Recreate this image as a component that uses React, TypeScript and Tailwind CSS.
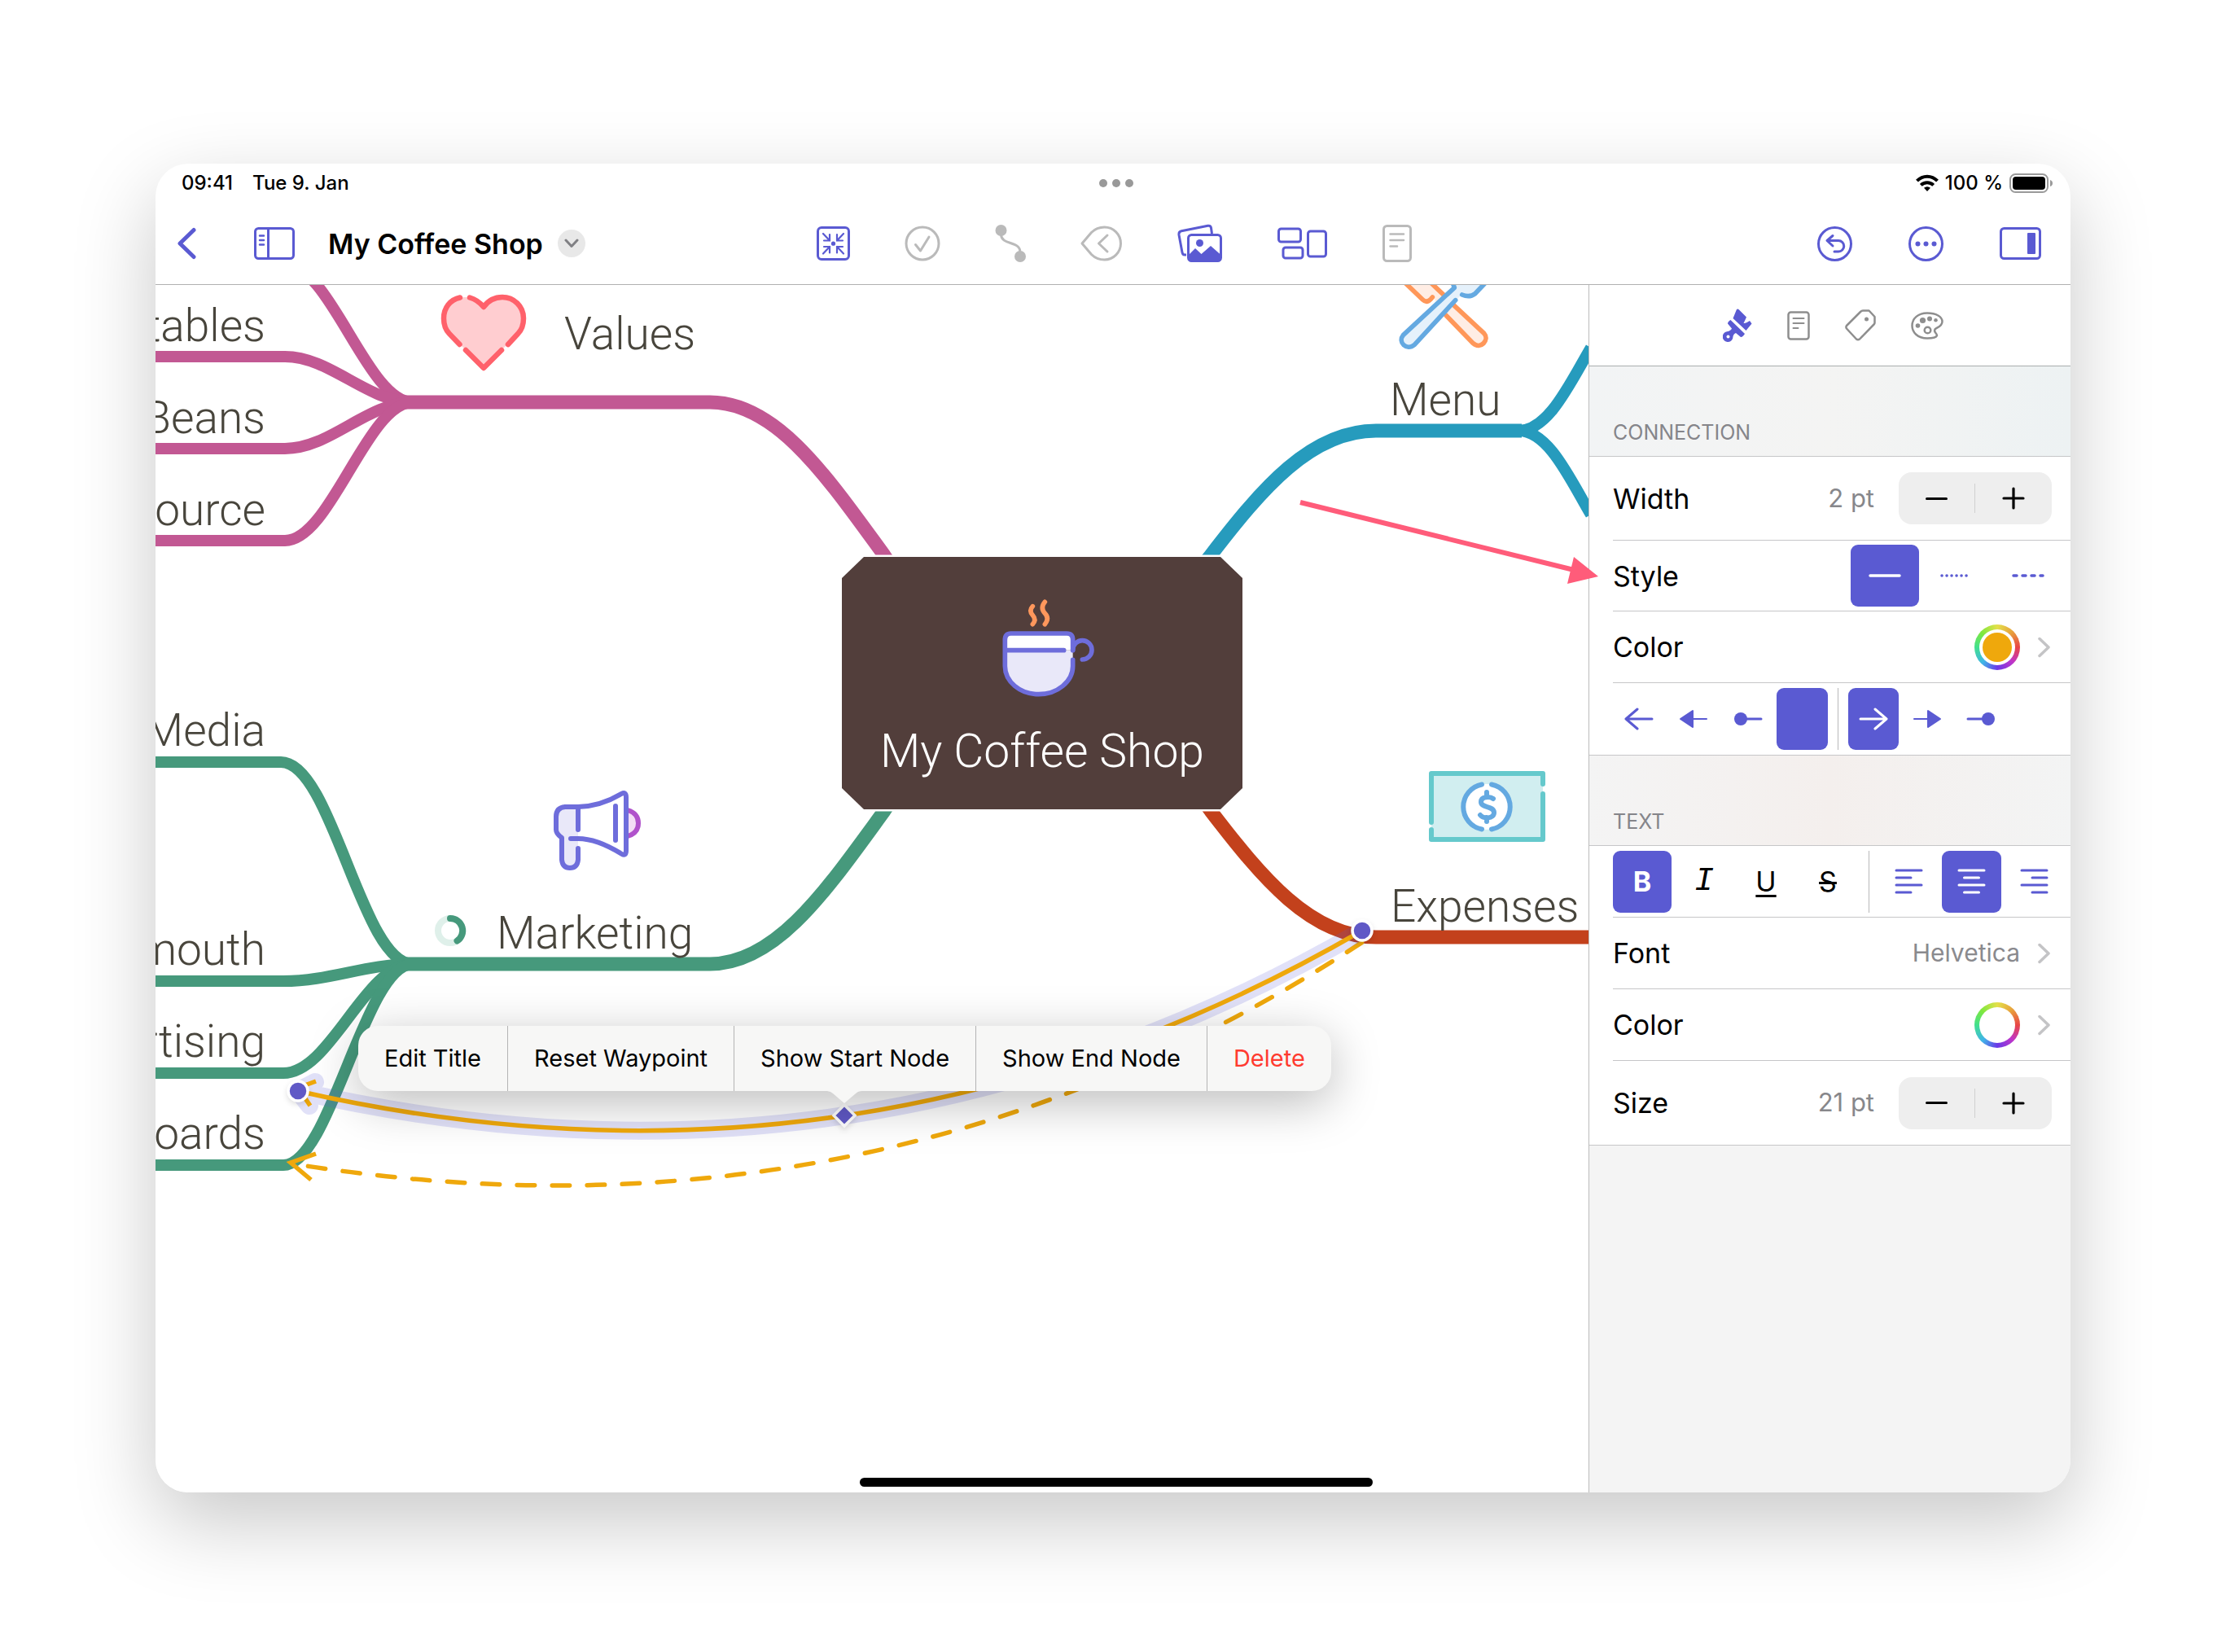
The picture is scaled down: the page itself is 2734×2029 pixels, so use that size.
import { useState, type ReactNode } from "react";
import clsx from "clsx";

const LABEL_BASELINE = 51;

// Labels on the left edge are anchored by their right end, the others by their left end
const labels = [
  { text: "tables", x: 135, y: 69, end: true },
  { text: "Beans", x: 135, y: 182, end: true },
  { text: "ource", x: 135, y: 295, end: true },
  { text: "Media", x: 135, y: 566, end: true },
  { text: "mouth", x: 135, y: 835, end: true },
  { text: "rtising", x: 135, y: 948, end: true },
  { text: "oards", x: 135, y: 1061, end: true },
  { text: "Values", x: 502, y: 79, end: false },
  { text: "Marketing", x: 419, y: 815, end: false },
  { text: "Menu", x: 1516, y: 160, end: false },
  { text: "Expenses", x: 1517, y: 782, end: false },
];

const menuItems = ["Edit Title", "Reset Waypoint", "Show Start Node", "Show End Node", "Delete"];

function IconButton({ label, children, className }: { label: string; children: ReactNode; className?: string }) {
  return (
    <button type="button" aria-label={label} className={clsx("flex shrink-0 items-center justify-center", className)}>
      {children}
    </button>
  );
}

function StatusBar() {
  return (
    <div className="grid h-12 grid-cols-[1fr_auto_1fr] items-center pl-2 text-[24px] font-medium">
      <div className="flex gap-6 pl-6">
        <span>09:41</span>
        <span>Tue 9. Jan</span>
      </div>
      <div className="flex gap-[6px]">
        <span className="size-[10px] rounded-full bg-[#999]" />
        <span className="size-[10px] rounded-full bg-[#999]" />
        <span className="size-[10px] rounded-full bg-[#999]" />
      </div>
      <div className="flex items-center justify-end gap-2 pr-[22px]">
        <svg width="28" height="22" viewBox="0 0 28 22" fill="none" stroke="black" strokeWidth="4">
          <path d="M1.5 8.2C8.5 .8 19.500 .8 26.500 8.200" />
          <path d="M6.300 13.400C10.500 9.200 17.500 9.200 21.700 13.400" />
          <path d="M14 21l-4-4.200q4-3.200 8 0z" fill="black" stroke="none" />
        </svg>
        <span>100 %</span>
        <svg width="53" height="24" viewBox="0 0 53 24">
          <rect x="1" y="1" width="46" height="22" rx="6.500" fill="none" stroke="#9a9a9a" strokeWidth="2" />
          <rect x="4" y="4" width="40" height="16" rx="4" />
          <path d="M50 8q3 1 3 4t-3 4z" fill="#9a9a9a" />
        </svg>
      </div>
    </div>
  );
}

function Toolbar() {
  return (
    <div className="grid h-[100px] grid-cols-[1fr_auto_1fr] items-center pl-2 text-[#5a5ad2]">
      <div className="flex items-center pl-[19px]">
        <IconButton label="Back">
          <svg width="24" height="40" viewBox="0 0 24 40" fill="none" stroke="currentColor" strokeWidth="5" strokeLinecap="round" strokeLinejoin="round">
            <path d="M20 3.500L3 20l17 16.500" />
          </svg>
        </IconButton>
        <IconButton label="Toggle sidebar" className="ml-[70px]">
          <svg width="50" height="40" viewBox="0 0 50 40" fill="none" stroke="currentColor" strokeWidth="3" strokeLinecap="round">
            <rect x="1.500" y="1.500" width="47" height="37" rx="4" />
            <path d="M17.500 2v36" />
            <path d="M7 10.500h5M7 16h5M7 21.500h5" strokeWidth="2.500" />
          </svg>
        </IconButton>
        <h1 className="ml-[41px] text-[34px] font-semibold whitespace-nowrap text-black">My Coffee Shop</h1>
        <IconButton label="Document options" className="ml-[18px] size-[34px] rounded-full bg-[#e8e8e8]">
          <svg width="20" height="12" viewBox="0 0 20 12" fill="none" stroke="#808084" strokeWidth="3" strokeLinecap="round" strokeLinejoin="round">
            <path d="M3 2l7 7.500L17 2" />
          </svg>
        </IconButton>
      </div>

      <div className="flex items-center gap-[67px] pr-[6px]">
        <IconButton label="Focus">
          <svg width="41" height="42" viewBox="0 0 41 42" fill="none" stroke="currentColor" strokeWidth="3">
            <rect x="1.500" y="1.500" width="38" height="39" rx="4.500" />
            <g strokeWidth="2.200" strokeLinecap="round">
              <path d="M8 9l8 8.500M16 10v7.500H9" />
              <path d="M33 9l-8 8.500M25 10v7.500h7" />
              <path d="M8 33.500l8-8.500M16 32.500V25H9" />
              <path d="M33 33.500L25 25M25 32.500V25h7" />
            </g>
            <circle cx="20.500" cy="21.200" r="2.600" fill="currentColor" stroke="none" />
          </svg>
        </IconButton>
        <IconButton label="Task" className="text-[#bababa]">
          <svg width="44" height="44" viewBox="0 0 44 44" fill="none" stroke="currentColor" strokeWidth="3" strokeLinecap="round" strokeLinejoin="round">
            <circle cx="22" cy="22" r="20" />
            <path d="M13.500 23.500L19.500 31 30 14" />
          </svg>
        </IconButton>
        <IconButton label="Connect" className="text-[#bababa]">
          <svg width="38" height="48" viewBox="0 0 38 48" fill="none" stroke="currentColor" strokeWidth="3">
            <path d="M7.500 8v5C8 27 31 20 31 35v5" />
            <circle cx="7.500" cy="8" r="7" fill="currentColor" stroke="none" />
            <circle cx="31" cy="40" r="7" fill="currentColor" stroke="none" />
          </svg>
        </IconButton>
        <IconButton label="Fold" className="text-[#bababa]">
          <svg width="52" height="44" viewBox="0 0 52 44" fill="none" stroke="currentColor" strokeWidth="3" strokeLinecap="round" strokeLinejoin="round">
            <path d="M2 22L13.500 8.500C18 4 23.500 2 29.500 2a20 20 0 0 1 0 40C23.500 42 18 40 13.500 35.500z" />
            <path d="M33 12L22.500 22 33 32" />
          </svg>
        </IconButton>
        <IconButton label="Stickers">
          <svg width="56" height="48" viewBox="0 0 56 48" fill="none" stroke="currentColor" strokeWidth="3" strokeLinejoin="round">
            <path d="M11 38H9q-2.500 0-3-3L2 13.500Q1.500 9.500 5 8.800L37.500 2.300Q41 1.800 41.500 5l1 7" />
            <rect x="13.500" y="13.500" width="40" height="32" rx="4" />
            <path d="M14 38l8-8 7.500 7L41 27l12.500 11v4q0 3-3 3h-34q-3 0-3-3z" fill="currentColor" stroke="none" />
            <circle cx="27.500" cy="23.500" r="4.500" fill="currentColor" stroke="none" />
          </svg>
        </IconButton>
        <IconButton label="Layout">
          <svg width="62" height="48" viewBox="0 0 62 48" fill="none" stroke="currentColor" strokeWidth="3">
            <rect x="1.500" y="6" width="27" height="16" rx="3" />
            <rect x="7" y="29" width="24" height="13" rx="3" />
            <rect x="37.500" y="9" width="22" height="31" rx="3" />
          </svg>
        </IconButton>
        <IconButton label="Note" className="text-[#bababa]">
          <svg width="36" height="46" viewBox="0 0 36 46" fill="none" stroke="currentColor" strokeWidth="3" strokeLinecap="round">
            <rect x="1.500" y="1.500" width="33" height="43" rx="4" />
            <path d="M9.500 11.500h16.500M9.500 19h16.500M9.500 26.500H18" strokeWidth="2.500" />
          </svg>
        </IconButton>
      </div>

      <div className="flex items-center justify-end gap-[69px] pr-9">
        <IconButton label="Undo">
          <svg width="43" height="43" viewBox="0 0 43 43" fill="none" stroke="currentColor" strokeWidth="3" strokeLinecap="round" strokeLinejoin="round">
            <circle cx="21.500" cy="21.500" r="20" />
            <path d="M19 11.500L12 17.500l7 6.500M12.500 17.500H26a6.700 6.700 0 0 1 0 13.500h-5" />
          </svg>
        </IconButton>
        <IconButton label="More">
          <svg width="43" height="43" viewBox="0 0 43 43" fill="currentColor">
            <circle cx="21.500" cy="21.500" r="20" fill="none" stroke="currentColor" strokeWidth="3" />
            <circle cx="11.500" cy="21.500" r="3" />
            <circle cx="21.500" cy="21.500" r="3" />
            <circle cx="31.500" cy="21.500" r="3" />
          </svg>
        </IconButton>
        <IconButton label="Toggle inspector">
          <svg width="51" height="40" viewBox="0 0 51 40" fill="none" stroke="currentColor" strokeWidth="3">
            <rect x="1.500" y="1.500" width="48" height="37" rx="4" />
            <rect x="34" y="7" width="10" height="26" rx="1" fill="currentColor" stroke="none" />
          </svg>
        </IconButton>
      </div>
    </div>
  );
}

function Links() {
  return (
    <svg className="absolute top-0 left-0" width="1760" height="1484" viewBox="0 0 1760 1484" fill="none">
      {/* Values */}
      <g stroke="#c25893" strokeWidth="14">
        <path d="M159 -25C215 -25 260 144 316 144" />
        <path d="M-10 88H159C215 88 260 144 316 144" />
        <path d="M-10 201H159C215 201 260 144 316 144" />
        <path d="M-10 314H159C215 314 260 144 316 144" />
        <path d="M306 144H681C763 144 825 236 895 332l16 24" strokeWidth="17" />
      </g>
      {/* Marketing */}
      <g stroke="#46997c" strokeWidth="14">
        <path d="M-10 586H154C217 586 253 834 316 834" />
        <path d="M-10 855H157C215 855 257 834 316 834" />
        <path d="M-10 968H157C215 968 257 834 316 834" />
        <path d="M-10 1081H157C215 1081 257 834 316 834" />
        <path d="M306 834H681C763 834 825 742 895 646l16-24" strokeWidth="17" />
      </g>
      {/* Menu */}
      <g stroke="#269bbd" strokeWidth="14">
        <path d="M1674 179C1711 179 1737 121 1763 77" />
        <path d="M1674 179C1711 179 1737 238 1763 282" />
        <path d="M1280 352l16-20C1359 250 1419 179 1499 179H1678" strokeWidth="17" />
      </g>
      {/* Expenses */}
      <path d="M1280 624l16 22C1359 728 1419 801 1499 801H1762" stroke="#c3411c" strokeWidth="17" />

      {/* Progress of Marketing */}
      <circle cx="362" cy="793" r="15" stroke="#dff0ea" strokeWidth="8" />
      <path d="M362 778a15 15 0 0 1 8.500 27.500" stroke="#46997c" strokeWidth="8" strokeLinecap="round" />

      {/* Dashed connection */}
      <g stroke="#efa80c" strokeWidth="5.500">
        <path d="M166 1079Q889 1196 1484 806" strokeDasharray="21.500 21.500" strokeDashoffset="21.500" strokeLinecap="round" />
        <path d="M197 1067L166 1078l25 21" />
      </g>

      {/* Selected connection */}
      <g stroke="#5856d6" strokeOpacity=".18" strokeWidth="22" strokeLinecap="round" strokeLinejoin="round">
        <path d="M175 990Q869 1148 1482 793M196 979L175 990l14 18" />
      </g>
      <path d="M175 990Q869 1148 1482 793M197 978L175 986l15 22" stroke="#efa80c" strokeWidth="5.500" />

      {/* Central topic */}
      <path d="M870 334h438l27 26v258l-27 26H870l-27-26V360z" fill="#523e3b" stroke="white" strokeWidth="5" paintOrder="stroke" />

      <g fill="#6059c6" stroke="white" strokeWidth="3.500">
        <circle cx="175" cy="990" r="12" className="drop-shadow-md" />
        <circle cx="1482" cy="793" r="12" className="drop-shadow-md" />
        <path d="M846 1007l13 13-13 13-13-13z" className="drop-shadow-md" />
      </g>
    </svg>
  );
}

function Stickers() {
  return (
    <>
      <svg className="absolute top-[11px] left-[350px]" width="106" height="96" viewBox="0 0 106 96" fill="none" stroke="#ff616b" strokeWidth="6.500" strokeLinecap="round" strokeLinejoin="round">
        <path d="M53 16C48 9 40 4 30 4 15 4 4 15 4 30c0 8 2 14 7 19l42 42 42-42c5-5 7-11 7-19C102 15 90 4 76 4 66 4 58 9 53 16z" fill="#ffcdd0" stroke="none" />
        <path d="M24 4.500C12 7 4 17 4 30c0 8 2 14 7 19l12.500 13" />
        <path d="M36 4.500C43 6.500 48 10 53 16 58 9 66 4 76 4c14 0 26 11 26 26 0 8-2 14-7 19L83 62" />
        <path d="M31 69l22 22 22-22" />
      </svg>
      <svg className="absolute top-0 left-[1524px]" width="115" height="82" viewBox="225 30 345 246" fill="none" strokeWidth="17" strokeLinecap="round" strokeLinejoin="round">
        <path d="M250 15L322 84Q337 98 358 75L508 245C535 270 570 232 548 208L350 20z" fill="#ffede4" stroke="none" />
        <path d="M250 15L322 84Q337 98 352 82l6-7M345 15l55 52M436 104L548 208C570 232 535 270 508 245L408 142" stroke="#ff9759" />
        <path d="M430 15l9 25L250 215C230 240 262 275 292 250L443 86l24-20Q495 78 515 62L560 15z" fill="#e5f1fb" stroke="none" />
        <path d="M430 15l9 25L250 215C230 240 262 275 292 250L443 86M467 66Q495 78 515 62L560 15" stroke="#64a9e1" />
      </svg>
      <svg className="absolute top-[620px] left-[487px]" width="112" height="103" viewBox="0 0 112 103" fill="none" stroke="#6e6ddb" strokeWidth="6" strokeLinecap="round" strokeLinejoin="round">
        <path d="M32 21H16Q5 22 5 33V49q0 5 7 10V86q1 10 10 10t10-10z" fill="#e9e8f9" stroke="none" />
        <path d="M93 25q13 4 13 16T93 57z" fill="#f3ddf5" stroke="none" />
        <path d="M93 25q13 4 13 16T93 57" stroke="#b052cb" />
        <path d="M32 49V21H16Q5 22 5 33V49q0 5 7 10V86q1 10 10 10t10-10V72" />
        <path d="M32 21Q60 20 85 5q6-3 6 4V75q0 7-6 3.500Q55 60 32 60H23M78 20V62" />
      </svg>
      <svg className="absolute top-[596px] left-[1563px]" width="146" height="90" viewBox="0 0 146 90" fill="none" stroke="#65c9cc" strokeWidth="6" strokeLinecap="round" strokeLinejoin="round">
        <path d="M4 4h137v81H4z" fill="#d1eef0" stroke="none" />
        <path d="M4 64V4h137v13M141 29V85H4V73" />
        <circle cx="72" cy="45" r="28" fill="white" stroke="none" />
        <g stroke="#64a9e1">
          <path d="M66 17.500a28 28 0 0 0 0 55M78 17.500a28 28 0 0 1 0 55" />
          <path d="M80 35C76 32 65 32 65 39c0 8 16 4 16 13 0 8-13 8-17 3M72 27v5M72 58v5" />
        </g>
      </svg>
    </>
  );
}

function CoffeeCup() {
  return (
    <svg className="ml-4" width="120" height="125" viewBox="625 220 360 375" fill="none" stroke="#6e6ddb" strokeWidth="17" strokeLinecap="round" strokeLinejoin="round">
      <path d="M746 252c-11 12-8 24 0 33 9 10 11 21 0 33M791 236c-13 16-11 30 0 42 12 12 12 25 0 40" stroke="#ff975c" />
      <path d="M644 352h250v62H644z" fill="white" stroke="none" />
      <path d="M644 414h250v58c0 58-58 104-126 104s-124-46-124-104z" fill="#e9e8f9" stroke="none" />
      <path d="M894 414v-38q0-24-22-24H666q-22 0-22 24v96c0 58 56 104 124 104s126-46 126-104v-23M644 414h217" />
      <path d="M894 413a35 35 0 1 1 35 35" />
    </svg>
  );
}

function ContextMenu() {
  return (
    <div className="absolute top-[910px] left-[249px] h-20 rounded-3xl bg-[#f7f7f6] shadow-[0_14px_60px_rgba(0,0,0,0.27)]">
      <div role="menu" className="flex h-full text-[29px]">
        {menuItems.map((item) => (
          <button
            key={item}
            type="button"
            role="menuitem"
            className={clsx("border-r border-[#b4b4b4] px-8 whitespace-nowrap last:border-r-0", item === "Delete" && "text-[#ff3b30]")}
          >
            {item}
          </button>
        ))}
      </div>
      <svg className="absolute top-full left-[575px]" width="44" height="16" viewBox="0 0 44 16" fill="#f7f7f6">
        <path d="M0 0q5 0 8 3l14 12L36 3q3-3 8-3z" />
      </svg>
    </div>
  );
}

function Canvas() {
  return (
    <main className="relative min-w-0 flex-1 overflow-hidden bg-white">
      <Links />
      <Stickers />
      {labels.map((l) => (
        <span
          key={l.text}
          className={clsx("absolute font-[Roboto] text-[55px] leading-[64px] font-light whitespace-nowrap text-[#48453c]", l.end && "-translate-x-full")}
          style={{ left: l.x, top: l.y - LABEL_BASELINE }}
        >
          {l.text}
        </span>
      ))}
      <div className="absolute top-[334px] left-[843px] flex h-[310px] w-[492px] flex-col items-center pt-[50px]">
        <CoffeeCup />
        <span className="mt-8 font-[Roboto] text-[57px] leading-[64px] font-light whitespace-nowrap text-white">My Coffee Shop</span>
      </div>
      <ContextMenu />
    </main>
  );
}

function Row({ label, className, children }: { label?: string; className: string; children: ReactNode }) {
  return (
    <div className={clsx("ml-[29px] flex items-center border-b border-[#c6c6c8] last:border-b-0", className)}>
      {label && <span className="mr-auto text-[34px]">{label}</span>}
      {children}
    </div>
  );
}

function Stepper({ name, value, onChange }: { name: string; value: number; onChange: (v: number) => void }) {
  return (
    <>
      <output className="mr-[30px] text-[31px] text-[#87878b]">{value} pt</output>
      <div className="flex h-16 items-center rounded-2xl bg-[#eee]">
        <button type="button" aria-label={`Decrease ${name}`} onClick={() => onChange(value - 1)} className="flex h-full w-[93px] items-center justify-center">
          <span className="h-[3px] w-[27px] rounded-full bg-black" />
        </button>
        <span className="h-9 w-px bg-[#d0d0d0]" />
        <button type="button" aria-label={`Increase ${name}`} onClick={() => onChange(value + 1)} className="flex h-full w-[94px] items-center justify-center">
          <svg width="28" height="28" viewBox="0 0 28 28" stroke="black" strokeWidth="3.200" strokeLinecap="round">
            <path d="M2 14h24M14 2v24" />
          </svg>
        </button>
      </div>
    </>
  );
}

function ColorWell({ className }: { className: string }) {
  return (
    <span className="flex size-14 items-center justify-center rounded-full bg-[conic-gradient(#e3e04a,#e8a33c_12%,#e84545_25%,#c035c8_37%,#6a3ae8_50%,#40b4e8_62%,#42e08e_75%,#7ee83e_87%,#e3e04a)]">
      <span className="flex size-11 items-center justify-center rounded-full bg-white">
        <span className={clsx("size-9 rounded-full", className)} />
      </span>
    </span>
  );
}

function Chevron() {
  return (
    <svg width="15" height="26" viewBox="0 0 15 26" fill="none" stroke="#c4c4c6" strokeWidth="3.500" strokeLinecap="round" strokeLinejoin="round">
      <path d="M2 2.500L13 13 2 23.500" />
    </svg>
  );
}

function Segment({ label, active, onClick, className, children }: { label: string; active: boolean; onClick: () => void; className: string; children?: ReactNode }) {
  return (
    <button
      type="button"
      aria-label={label}
      aria-pressed={active}
      onClick={onClick}
      className={clsx("flex h-[76px] shrink-0 items-center justify-center rounded-[9px]", active && "bg-[#5a5ad2]", className)}
    >
      {children}
    </button>
  );
}

const lineStyles = [
  { id: "solid", dash: undefined },
  { id: "dotted", dash: "0.1 5.9" },
  { id: "dashed", dash: "4 7" },
];

const heads = {
  open: <path d="M2 14h32M16 2L2 14l14 12" />,
  filled: <path d="M17 14h17M2 14l15-10v20z" fill="currentColor" strokeWidth="2" />,
  dot: (
    <>
      <path d="M10 14h24" />
      <circle cx="9" cy="14" r="8" fill="currentColor" stroke="none" />
    </>
  ),
  none: null,
};

type Head = keyof typeof heads;

function HeadIcon({ head, flip }: { head: Head; flip?: boolean }) {
  return (
    <svg width="36" height="28" viewBox="0 0 36 28" fill="none" stroke="currentColor" strokeWidth="3" strokeLinecap="round" strokeLinejoin="round" className={clsx(flip && "-scale-x-100")}>
      {heads[head]}
    </svg>
  );
}

const startHeads: Head[] = ["open", "filled", "dot", "none"];
const endHeads: Head[] = ["open", "filled", "dot"];

const aligns = [
  { id: "left", d: "M2 3h31M2 12h18M2 21h31M2 30h18" },
  { id: "center", d: "M2 3h31M8.500 12h18M2 21h31M8.500 30h18" },
  { id: "right", d: "M2 3h31M15 12h18M2 21h31M15 30h18" },
];

function Inspector() {
  const [width, setWidth] = useState(2);
  const [size, setSize] = useState(21);
  const [lineStyle, setLineStyle] = useState("solid");
  const [startHead, setStartHead] = useState<Head>("none");
  const [endHead, setEndHead] = useState<Head>("open");
  const [align, setAlign] = useState("center");
  const [bold, setBold] = useState(true);
  const [italic, setItalic] = useState(false);
  const [underline, setUnderline] = useState(false);
  const [strike, setStrike] = useState(false);

  return (
    <aside className="w-[592px] shrink-0 border-l border-[#bcbcbc] bg-[#f4f4f4]">
      <div className="flex h-[100px] items-center justify-center gap-[43px] border-b border-[#a9adae] bg-white pl-2 text-[#8e8e8e]">
        <IconButton label="Style" className="text-[#5a5ad2]">
          <svg width="36" height="41" viewBox="0 0 36 41" fill="currentColor">
            <path d="M17 1L12.500 12l16 15 7-8.500L33 15q-5 3.500-7.500 3Q27 15 29 10.500L20 1.500q-1.500-1.500-3-.5z" />
            <path d="M9.500 14L27 31q-3 4.500-5 4l-6-5q-3 1-3.500 4.500A6.400 6.400 0 1 1 5 28.300q5-1 6-3.800L6 18.500Q6 16 9.500 14z" />
            <circle cx="6.500" cy="34.500" r="2" fill="white" />
          </svg>
        </IconButton>
        <IconButton label="Note">
          <svg width="28" height="36" viewBox="0 0 28 36" fill="none" stroke="currentColor" strokeWidth="2.500" strokeLinecap="round">
            <rect x="1.500" y="1.500" width="25" height="33" rx="3" />
            <path d="M7.500 9h13M7.500 15h13M7.500 21h6" strokeWidth="2" />
          </svg>
        </IconButton>
        <IconButton label="Tags">
          <svg width="38" height="39" viewBox="0 0 38 39" fill="none" stroke="currentColor" strokeWidth="2.500" strokeLinejoin="round">
            <path d="M2 20L19 3Q20.500 1.500 22 1.500h7.500L36.500 9v7.500q0 1-1 2L18 36.500q-2 1.500-4 0L2 23.500Q.8 21.700 2 20z" />
            <circle cx="26.500" cy="12" r="2.500" fill="currentColor" stroke="none" />
          </svg>
        </IconButton>
        <IconButton label="Theme">
          <svg width="40" height="34" viewBox="0 0 40 34" fill="none" stroke="currentColor" strokeWidth="2.500">
            <path d="M20 1.500c11 0 18.500 4.500 18.500 10.500 0 6-6.500 7-9 9.500C27.500 25 32 26 32 29c-1 3-6 3.500-12 3.500C8 32.500 1.500 25 1.500 17 1.500 8 9 1.500 20 1.500z" />
            <g fill="currentColor" stroke="none">
              <circle cx="14.500" cy="10.500" r="3.600" />
              <circle cx="23" cy="8.500" r="3" />
              <circle cx="30.500" cy="10.200" r="2.300" />
              <circle cx="8.500" cy="17" r="2.800" />
            </g>
            <circle cx="20.500" cy="22.500" r="3.800" />
          </svg>
        </IconButton>
      </div>

      <h2 className="flex h-[111px] items-end border-b border-[#c6c6c8] bg-linear-to-r from-[#f2f4f5] via-[#f4f4f3] to-[#edf2f3] px-[29px] pb-[10px] text-[25px] text-[#85858a]">CONNECTION</h2>
      <div className="border-b border-[#c6c6c8] bg-white">
        <Row label="Width" className="h-[103px] pr-[23px]">
          <Stepper name="width" value={width} onChange={setWidth} />
        </Row>
        <Row label="Style" className="h-[87px] gap-1 pr-[10px]">
          {lineStyles.map((s) => (
            <Segment key={s.id} label={s.id} active={lineStyle === s.id} onClick={() => setLineStyle(s.id)} className={clsx("w-[84px]", lineStyle === s.id ? "text-white" : "text-[#5a5ad2]")}>
              <svg width="40" height="4" viewBox="0 0 40 4" stroke="currentColor" strokeWidth="3.500" strokeLinecap="round">
                <path d="M2 2h36" strokeDasharray={s.dash} />
              </svg>
            </Segment>
          ))}
        </Row>
        <Row label="Color" className="h-[88px] pr-[25px]">
          <button type="button" aria-label="Connection color" className="flex items-center gap-[22px]">
            <ColorWell className="bg-[#efa80c]" />
            <Chevron />
          </button>
        </Row>
        <Row className="h-[88px] gap-1">
          {startHeads.map((h) => (
            <Segment key={h} label={`Start ${h}`} active={startHead === h} onClick={() => setStartHead(h)} className={clsx("w-[63px]", startHead === h ? "text-white" : "text-[#5a5ad2]")}>
              <HeadIcon head={h} />
            </Segment>
          ))}
          <span className="mx-2 h-[76px] w-px bg-[#b8b8ba]" />
          {endHeads.map((h) => (
            <Segment key={h} label={`End ${h}`} active={endHead === h} onClick={() => setEndHead(h)} className={clsx("w-[62px]", endHead === h ? "text-white" : "text-[#5a5ad2]")}>
              <HeadIcon head={h} flip />
            </Segment>
          ))}
        </Row>
      </div>

      <h2 className="flex h-[111px] items-end border-b border-[#c6c6c8] bg-linear-to-r from-[#f4f4f4] via-[#f4efed] to-[#f3f4f4] px-[29px] pb-[10px] text-[25px] text-[#85858a]">TEXT</h2>
      <div className="border-b border-[#c6c6c8] bg-white">
        <Row className="h-[88px] gap-1">
          <Segment label="Bold" active={bold} onClick={() => setBold(!bold)} className={clsx("w-[72px] text-[34px] font-bold", bold && "text-white")}>
            B
          </Segment>
          <Segment label="Italic" active={italic} onClick={() => setItalic(!italic)} className={clsx("w-[72px] font-['Liberation_Mono'] text-[40px] italic", italic && "text-white")}>
            I
          </Segment>
          <Segment label="Underline" active={underline} onClick={() => setUnderline(!underline)} className={clsx("w-[72px] text-[34px] underline decoration-[3px] underline-offset-4", underline && "text-white")}>
            U
          </Segment>
          <Segment label="Strikethrough" active={strike} onClick={() => setStrike(!strike)} className={clsx("w-[72px] text-[34px] line-through decoration-[3px]", strike && "text-white")}>
            S
          </Segment>
          <span className="mr-2 ml-[10px] h-[76px] w-px bg-[#b8b8ba]" />
          {aligns.map((a) => (
            <Segment key={a.id} label={`Align ${a.id}`} active={align === a.id} onClick={() => setAlign(a.id)} className={clsx("w-[73px]", align === a.id ? "text-white" : "text-[#5a5ad2]")}>
              <svg width="35" height="33" viewBox="0 0 35 33" fill="none" stroke="currentColor" strokeWidth="3" strokeLinecap="round">
                <path d={a.d} />
              </svg>
            </Segment>
          ))}
        </Row>
        <Row label="Font" className="h-[88px] pr-[25px]">
          <button type="button" aria-label="Font: Helvetica" className="flex items-center gap-[22px] text-[30px] text-[#8a8a8e]">
            Helvetica
            <Chevron />
          </button>
        </Row>
        <Row label="Color" className="h-[88px] pr-[25px]">
          <button type="button" aria-label="Text color" className="flex items-center gap-[22px]">
            <ColorWell className="bg-white" />
            <Chevron />
          </button>
        </Row>
        <Row label="Size" className="h-[103px] pr-[23px]">
          <Stepper name="size" value={size} onChange={setSize} />
        </Row>
      </div>
    </aside>
  );
}

export default function App() {
  return (
    <div className="flex min-h-screen bg-white px-[191px] pt-[201px] pb-[196px] font-[Inter,sans-serif] text-black">
      <div className="relative flex w-full flex-col overflow-hidden rounded-[40px] bg-white shadow-[0_36px_100px_rgba(0,0,0,0.22)]">
        <header className="border-b border-[#b0b0b0]">
          <StatusBar />
          <Toolbar />
        </header>
        <div className="relative flex flex-1">
          <Canvas />
          <Inspector />
          {/* Callout arrow from the canvas to the style row */}
          <svg className="pointer-events-none absolute top-[260px] right-[578px]" width="370" height="112" viewBox="1403 260 370 112">
            <path d="M1405 267L1745 351" stroke="#ff5c7a" strokeWidth="6" />
            <path d="M1771 358l-38 9 8-33z" fill="#ff5c7a" />
          </svg>
        </div>
        <div className="absolute inset-x-0 bottom-[7px] flex justify-center pl-2">
          <span className="h-[11px] w-[630px] rounded-full bg-black" />
        </div>
      </div>
    </div>
  );
}
